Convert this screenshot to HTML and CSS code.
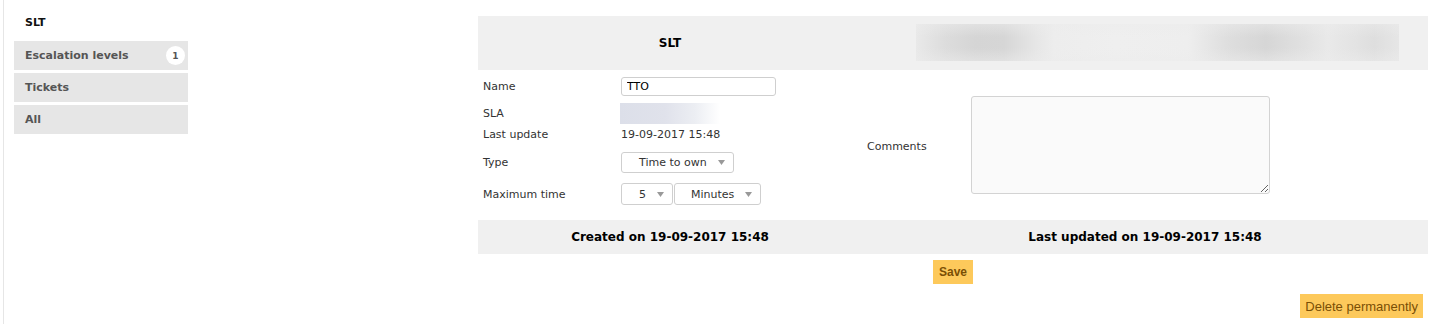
FILE: index.html
```html
<!DOCTYPE html>
<html>
<head>
<meta charset="utf-8">
<link rel="stylesheet" href="styles.css">
</head>
<body>
<div class="page">
  <aside class="sidebar">
    <div class="side-title">SLT</div>
    <nav class="menu">
      <div class="menu-item"><span>Escalation levels</span><span class="badge">1</span></div>
      <div class="menu-item"><span>Tickets</span></div>
      <div class="menu-item"><span>All</span></div>
    </nav>
  </aside>
  <main class="main">
    <div class="head">
      <div class="head-title">SLT</div>
      <div class="head-blur"><div class="blur-strip"></div></div>
    </div>
    <div class="form">
      <div class="lbl row1">Name</div>
      <div class="val row1"><input class="text-input" type="text" value="TTO"></div>
      <div class="lbl row2">SLA</div>
      <div class="val row2"><div class="sla-blur"></div></div>
      <div class="lbl row3">Last update</div>
      <div class="val row3">19-09-2017 15:48</div>
      <div class="lbl row4">Type</div>
      <div class="val row4">
        <div class="select sel-type"><span>Time to own</span><svg class="arrow" width="7" height="5" viewBox="0 0 7 5"><polygon points="0,0 7,0 3.5,5" fill="#999"/></svg></div>
      </div>
      <div class="lbl row5">Maximum time</div>
      <div class="val row5 sel-group">
        <div class="select sel-num"><span>5</span><svg class="arrow" width="7" height="5" viewBox="0 0 7 5"><polygon points="0,0 7,0 3.5,5" fill="#999"/></svg></div>
        <div class="select sel-unit"><span>Minutes</span><svg class="arrow" width="7" height="5" viewBox="0 0 7 5"><polygon points="0,0 7,0 3.5,5" fill="#999"/></svg></div>
      </div>
      <div class="comments">
        <div class="lbl2">Comments</div>
        <textarea class="comments-box"></textarea>
      </div>
    </div>
    <div class="foot">
      <div class="foot-cell">Created on 19-09-2017 15:48</div>
      <div class="foot-cell">Last updated on 19-09-2017 15:48</div>
    </div>
    <div class="actions"><button class="btn btn-save">Save</button></div>
    <div class="actions-right"><button class="btn btn-delete">Delete permanently</button></div>
  </main>
</div>
</body>
</html>
```

FILE: styles.css
```css
html, body {
  margin: 0;
  padding: 0;
  background: #fff;
}
body {
  font-family: "DejaVu Sans", Verdana, sans-serif;
  font-size: 11px;
  color: #333;
}
.page {
  display: flex;
  margin-left: 3px;
  border-left: 1px solid #e6e6e6;
  min-height: 324px;
  box-sizing: border-box;
}
.sidebar {
  margin-left: 10px;
  width: 174px;
  padding-top: 16px;
  flex: none;
}
.side-title {
  font-weight: bold;
  color: #111;
  height: 14px;
  line-height: 14px;
  padding-left: 11px;
  margin-bottom: 11px;
}
.menu {
  display: flex;
  flex-direction: column;
  gap: 3px;
}
.menu-item {
  height: 29px;
  background: #e6e6e6;
  display: flex;
  align-items: center;
  justify-content: space-between;
  padding: 0 3px 0 11px;
  font-weight: bold;
  color: #555;
}
.badge {
  width: 19px;
  height: 19px;
  border-radius: 50%;
  background: #fff;
  display: flex;
  align-items: center;
  justify-content: center;
  font-size: 9px;
  font-weight: bold;
  color: #555;
}
.main {
  margin-left: 290px;
  width: 950px;
  padding-top: 16px;
  flex: none;
}
.head {
  display: grid;
  grid-template-columns: 384px 566px;
  height: 54px;
  background: #f0f0f0;
}
.head-title {
  display: flex;
  align-items: center;
  justify-content: center;
  font-weight: bold;
  font-size: 12px;
  color: #000;
}
.head-blur {
  padding: 8px 29px 9px 54px;
}
.blur-strip {
  height: 37px;
  background:
    linear-gradient(to bottom, rgba(236,236,236,0.5) 0%, rgba(236,236,236,0) 35%, rgba(236,236,236,0) 65%, rgba(236,236,236,0.5) 100%),
    linear-gradient(to right, #e9e9e9 0px, #dcdcdc 30px, #d5d5d5 60px, #d6d6d6 88px, #e6e6e6 120px, #ededed 138px, #efefef 200px, #eeeeee 272px, #dedede 312px, #d6d6d6 350px, #e0e0e0 385px, #e9e9e9 412px, #e3e3e3 440px, #dedede 458px, #e6e6e6 483px);
}
.form {
  display: grid;
  grid-template-columns: 138px 246px 104px 462px;
  grid-template-rows: 32px 22px 20px 36px 28px;
  padding-bottom: 12px;
}
.lbl {
  grid-column: 1;
  align-self: center;
  padding-left: 5px;
}
.val {
  grid-column: 2;
  align-self: center;
  padding-left: 5px;
  display: flex;
  align-items: center;
}
.row1 { grid-row: 1; }
.row2 { grid-row: 2; }
.row3 { grid-row: 3; }
.row4 { grid-row: 4; }
.row5 { grid-row: 5; }
.text-input {
  box-sizing: border-box;
  width: 155px;
  height: 19px;
  border: 1px solid #cfcfcf;
  border-radius: 3px;
  padding: 0 5px;
  margin: 0;
  font-family: "DejaVu Sans", Verdana, sans-serif;
  font-size: 11px;
  color: #000;
  background: #fff;
  outline: none;
}
.sla-blur {
  width: 100px;
  height: 21px;
  margin-left: -1px;
  background: linear-gradient(to right, #dcdfe9 0%, #e0e2eb 45%, #eceef3 75%, #ffffff 100%);
}
.select {
  box-sizing: border-box;
  border: 1px solid #cfcfcf;
  border-radius: 3px;
  background: #fff;
  display: flex;
  align-items: center;
  justify-content: space-between;
  padding: 0 8px 0 17px;
  color: #333;
}
.sel-type {
  width: 113px;
  height: 21px;
}
.sel-group {
  gap: 1px;
}
.sel-num {
  width: 52px;
  height: 22px;
}
.sel-unit {
  width: 87px;
  height: 22px;
  padding-left: 16px;
}
.arrow {
  display: block;
  flex: none;
}
.comments {
  grid-column: 3 / 5;
  grid-row: 1 / 6;
  align-self: start;
  margin-top: 26px;
  display: flex;
  align-items: center;
}
.lbl2 {
  width: 104px;
  box-sizing: border-box;
  padding-left: 5px;
  padding-top: 2px;
}
.comments-box {
  box-sizing: border-box;
  margin: 0 0 0 5px;
  width: 299px;
  height: 98px;
  border: 1px solid #d3d3d3;
  border-radius: 3px;
  background: #fafafa;
  display: block;
  outline: none;
  padding: 2px;
}
.foot {
  display: grid;
  grid-template-columns: 384px 566px;
  height: 34px;
  background: #f0f0f0;
}
.foot-cell {
  display: flex;
  align-items: center;
  justify-content: center;
  font-weight: bold;
  font-size: 12px;
  color: #000;
}
.actions {
  display: flex;
  justify-content: center;
  margin-top: 6px;
}
.actions-right {
  display: flex;
  justify-content: flex-end;
  margin-top: 10px;
  padding-right: 5px;
}
.btn {
  border: none;
  margin: 0;
  height: 24px;
  background: #fdc95b;
  color: #7a4f05;
  font-family: "Liberation Sans", Arial, sans-serif;
  cursor: pointer;
}
.btn-save {
  padding: 0 6px;
  min-width: 37px;
  font-weight: bold;
  font-size: 12px;
}
.btn-delete {
  padding: 0 5px;
  font-size: 13px;
}
```
